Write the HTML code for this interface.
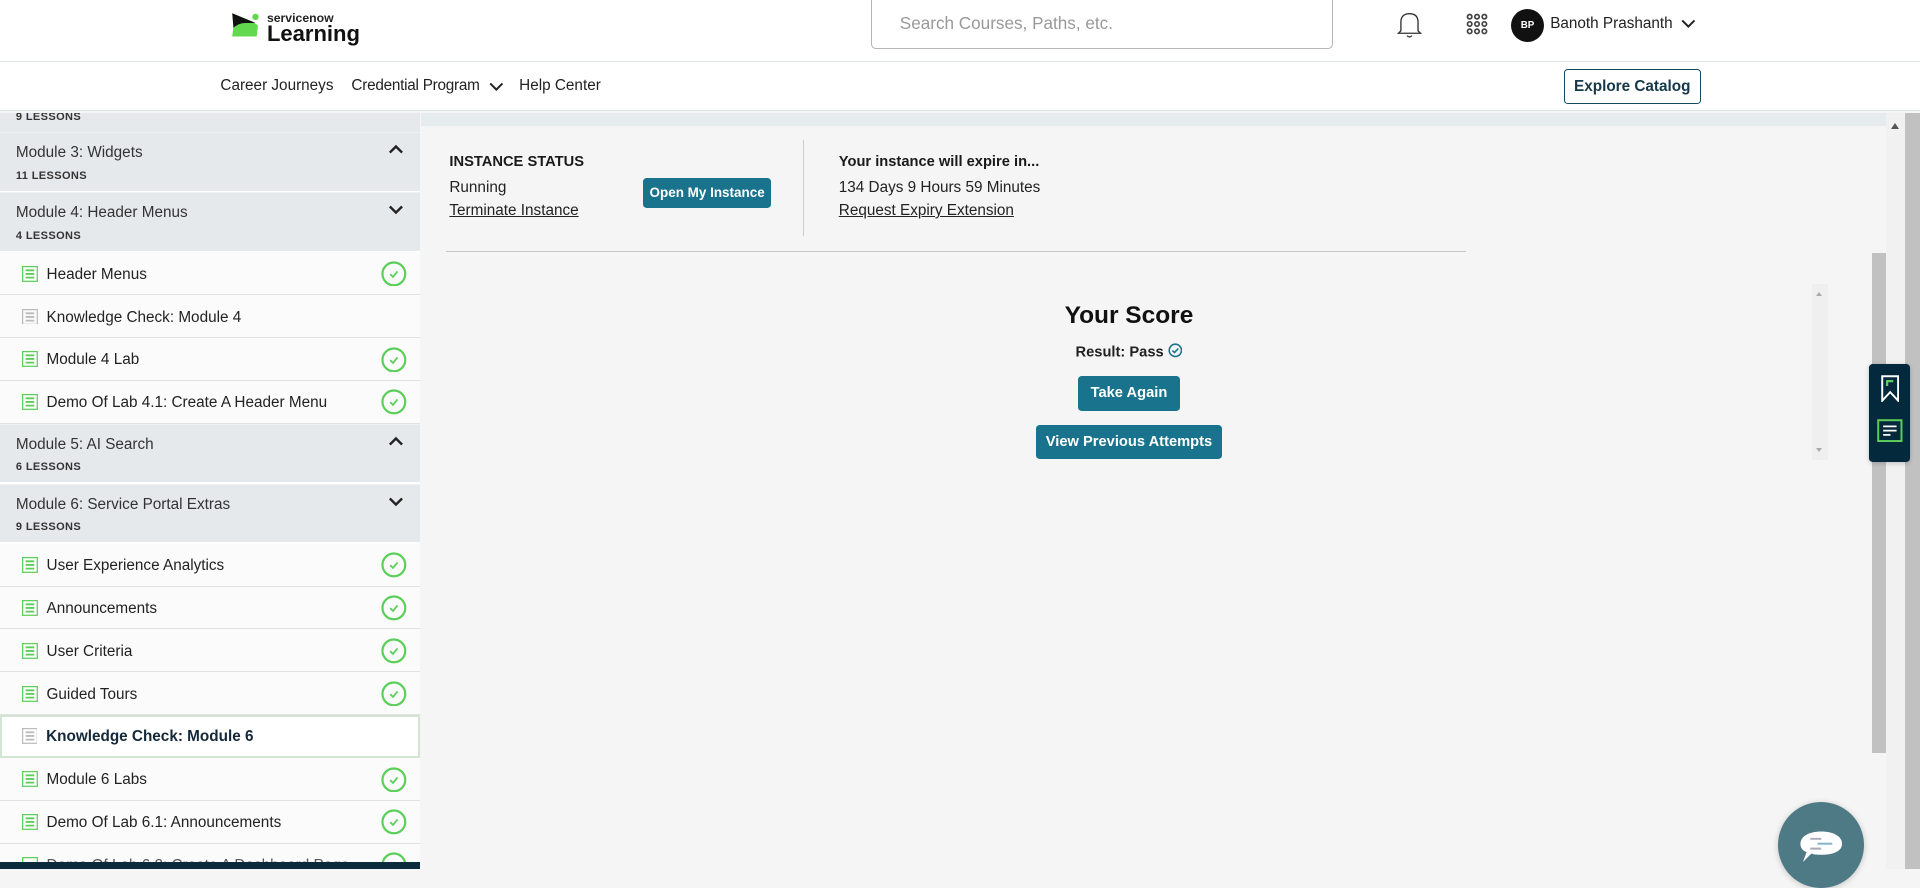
<!DOCTYPE html>
<html><head><meta charset="utf-8">
<style>
html{zoom:1.224489}
*{box-sizing:border-box;margin:0;padding:0}
body{width:1568px;height:710px;overflow:hidden;position:relative;background:#f5f5f5;font-family:"Liberation Sans",sans-serif;color:#1a1a1a}
.a{position:absolute}
.top{left:0;top:0;width:1568px;height:91px;background:#fff;border-bottom:1px solid #dfe4e6}
.top .l1{left:0;top:50px;width:1568px;height:1px;background:#dfe4e6}
.nav{font-size:12.5px;color:#222;top:63px}
.side{left:0;top:92px;width:343px;height:618px;background:#fff;overflow:hidden}
.mod{position:absolute;left:0;width:343px;height:48px;background:#e6e9eb;border-top:1px solid #eef0f1}
.mod .t{position:absolute;left:13px;top:9px;font-size:12.5px;color:#333}
.mod .s{position:absolute;left:13px;top:30px;font-size:9px;font-weight:bold;color:#333;letter-spacing:.3px}
.mod .c{position:absolute;left:317px;top:9px}
.row{position:absolute;left:0;width:343px;height:35px;background:#fbfbfb;border-bottom:1px solid #e2e2e2}
.row .t{position:absolute;left:38px;top:11px;font-size:12.5px;color:#222}
.row .ic{position:absolute;left:18px;top:11px}
.row .ck{position:absolute;left:311px;top:7px}
.btn{background:#19738c;color:#fff;font-weight:bold;font-size:12px;border-radius:3px;text-align:center}
u{text-decoration:underline}
</style></head><body>
<div class="a top">
 <div class="a l1"></div>
 <svg class="a" style="left:189px;top:10px" width="25" height="21" viewBox="0 0 25 21"><path d="M1 1 L18 8 L22 11 L21 20 L1 20 L2 12 Z" fill="#62d84e"/><path d="M1 1 L20 9 L12 9 Q6 9 2 13 Z" fill="#111"/><circle cx="20" cy="4" r="2.6" fill="#62d84e"/></svg>
 <div class="a" style="left:218px;top:9px;font-size:10px;font-weight:bold;color:#222">servicenow</div>
 <div class="a" style="left:218px;top:17px;font-size:18px;font-weight:bold;color:#111">Learning</div>
 <div class="a" style="left:711px;top:0;width:378px;height:40px;border:1px solid #b5b5b5;border-top:none;border-radius:0 0 4px 4px;background:#fff"><span class="a" style="left:23px;top:11px;font-size:14px;color:#999">Search Courses, Paths, etc.</span></div>
 <svg class="a" style="left:1140px;top:8px" width="22" height="24" viewBox="0 0 22 24"><path d="M4 17 L4 10 Q4 3 11 3 Q18 3 18 10 L18 17 L20 19 L2 19 Z" fill="none" stroke="#333" stroke-width="1.1"/><path d="M9 21 Q11 23 13 21" fill="none" stroke="#333" stroke-width="1.1"/></svg>
 <svg class="a" style="left:1197px;top:11px" width="18" height="18" viewBox="0 0 18 18" fill="none" stroke="#444" stroke-width="1.4"><circle cx="3" cy="3" r="1.8"/><circle cx="9" cy="3" r="1.8"/><circle cx="15" cy="3" r="1.8"/><circle cx="3" cy="9" r="1.8"/><circle cx="9" cy="9" r="1.8"/><circle cx="15" cy="9" r="1.8"/><circle cx="3" cy="15" r="1.8"/><circle cx="9" cy="15" r="1.8"/><circle cx="15" cy="15" r="1.8"/></svg>
 <div class="a" style="left:1234px;top:7px;width:27px;height:27px;border-radius:50%;background:#111;color:#fff;font-size:8px;font-weight:bold;text-align:center;line-height:27px">BP</div>
 <div class="a" style="left:1266px;top:12px;font-size:12.5px;color:#222">Banoth Prashanth</div>
 <svg class="a" style="left:1373px;top:15px" width="12" height="9" viewBox="0 0 12 9"><path d="M1 2 L6 7 L11 2" fill="none" stroke="#222" stroke-width="1.6"/></svg>
 <div class="a nav" style="left:180px">Career Journeys</div>
 <div class="a nav" style="left:287px;letter-spacing:-.2px">Credential Program</div>
 <svg class="a" style="left:399px;top:66px" width="12" height="9" viewBox="0 0 12 9"><path d="M1 2 L6 7 L11 2" fill="none" stroke="#222" stroke-width="1.6"/></svg>
 <div class="a nav" style="left:424px">Help Center</div>
 <div class="a" style="left:1277px;top:56px;width:112px;height:29px;border:1px solid #15485b;border-radius:3px;font-size:12.5px;font-weight:bold;color:#15384a;text-align:center;line-height:27px">Explore Catalog</div>
</div>

<div class="a side">
 <div class="mod" style="top:-32px;height:48px"><div class="s" style="top:30px">9 LESSONS</div></div>
 <div class="mod" style="top:16px"><div class="t">Module 3: Widgets</div><div class="s">11 LESSONS</div><svg class="c" width="13" height="9" viewBox="0 0 13 9"><path d="M1.5 7 L6.5 2 L11.5 7" fill="none" stroke="#222" stroke-width="2"/></svg></div>
 <div class="mod" style="top:65px"><div class="t">Module 4: Header Menus</div><div class="s">4 LESSONS</div><svg class="c" width="13" height="9" viewBox="0 0 13 9"><path d="M1.5 2 L6.5 7 L11.5 2" fill="none" stroke="#222" stroke-width="2"/></svg></div>
 <div class="row" style="top:114px"><svg class="ic" width="13" height="13"><rect x=".5" y=".5" width="12" height="12" fill="none" stroke="#5ccf5a"/><path d="M3 3.5h7M3 6.5h7M3 9.5h7" stroke="#5ccf5a" stroke-width="1.5"/></svg><div class="t">Header Menus</div><svg class="ck" width="21" height="21"><circle cx="10.5" cy="10.5" r="9.3" fill="none" stroke="#5ccf5a" stroke-width="1.8"/><path d="M7.5 10.8 L9.8 13 L13.5 8.5" fill="none" stroke="#5ccf5a" stroke-width="1.5"/></svg></div>
 <div class="row" style="top:149px"><svg class="ic" width="13" height="13"><rect x=".5" y=".5" width="12" height="12" fill="none" stroke="#bbb"/><path d="M3 3.5h7M3 6.5h7M3 9.5h7" stroke="#bbb" stroke-width="1.5"/></svg><div class="t">Knowledge Check: Module 4</div></div>
 <div class="row" style="top:184px"><svg class="ic" width="13" height="13"><rect x=".5" y=".5" width="12" height="12" fill="none" stroke="#5ccf5a"/><path d="M3 3.5h7M3 6.5h7M3 9.5h7" stroke="#5ccf5a" stroke-width="1.5"/></svg><div class="t">Module 4 Lab</div><svg class="ck" width="21" height="21"><circle cx="10.5" cy="10.5" r="9.3" fill="none" stroke="#5ccf5a" stroke-width="1.8"/><path d="M7.5 10.8 L9.8 13 L13.5 8.5" fill="none" stroke="#5ccf5a" stroke-width="1.5"/></svg></div>
 <div class="row" style="top:219px"><svg class="ic" width="13" height="13"><rect x=".5" y=".5" width="12" height="12" fill="none" stroke="#5ccf5a"/><path d="M3 3.5h7M3 6.5h7M3 9.5h7" stroke="#5ccf5a" stroke-width="1.5"/></svg><div class="t">Demo Of Lab 4.1: Create A Header Menu</div><svg class="ck" width="21" height="21"><circle cx="10.5" cy="10.5" r="9.3" fill="none" stroke="#5ccf5a" stroke-width="1.8"/><path d="M7.5 10.8 L9.8 13 L13.5 8.5" fill="none" stroke="#5ccf5a" stroke-width="1.5"/></svg></div>
 <div class="mod" style="top:254px"><div class="t">Module 5: AI Search</div><div class="s">6 LESSONS</div><svg class="c" width="13" height="9" viewBox="0 0 13 9"><path d="M1.5 7 L6.5 2 L11.5 7" fill="none" stroke="#222" stroke-width="2"/></svg></div>
 <div class="mod" style="top:303px"><div class="t">Module 6: Service Portal Extras</div><div class="s">9 LESSONS</div><svg class="c" width="13" height="9" viewBox="0 0 13 9"><path d="M1.5 2 L6.5 7 L11.5 2" fill="none" stroke="#222" stroke-width="2"/></svg></div>
 <div class="row" style="top:352px"><svg class="ic" width="13" height="13"><rect x=".5" y=".5" width="12" height="12" fill="none" stroke="#5ccf5a"/><path d="M3 3.5h7M3 6.5h7M3 9.5h7" stroke="#5ccf5a" stroke-width="1.5"/></svg><div class="t">User Experience Analytics</div><svg class="ck" width="21" height="21"><circle cx="10.5" cy="10.5" r="9.3" fill="none" stroke="#5ccf5a" stroke-width="1.8"/><path d="M7.5 10.8 L9.8 13 L13.5 8.5" fill="none" stroke="#5ccf5a" stroke-width="1.5"/></svg></div>
 <div class="row" style="top:387px"><svg class="ic" width="13" height="13"><rect x=".5" y=".5" width="12" height="12" fill="none" stroke="#5ccf5a"/><path d="M3 3.5h7M3 6.5h7M3 9.5h7" stroke="#5ccf5a" stroke-width="1.5"/></svg><div class="t">Announcements</div><svg class="ck" width="21" height="21"><circle cx="10.5" cy="10.5" r="9.3" fill="none" stroke="#5ccf5a" stroke-width="1.8"/><path d="M7.5 10.8 L9.8 13 L13.5 8.5" fill="none" stroke="#5ccf5a" stroke-width="1.5"/></svg></div>
 <div class="row" style="top:422px"><svg class="ic" width="13" height="13"><rect x=".5" y=".5" width="12" height="12" fill="none" stroke="#5ccf5a"/><path d="M3 3.5h7M3 6.5h7M3 9.5h7" stroke="#5ccf5a" stroke-width="1.5"/></svg><div class="t">User Criteria</div><svg class="ck" width="21" height="21"><circle cx="10.5" cy="10.5" r="9.3" fill="none" stroke="#5ccf5a" stroke-width="1.8"/><path d="M7.5 10.8 L9.8 13 L13.5 8.5" fill="none" stroke="#5ccf5a" stroke-width="1.5"/></svg></div>
 <div class="row" style="top:457px"><svg class="ic" width="13" height="13"><rect x=".5" y=".5" width="12" height="12" fill="none" stroke="#5ccf5a"/><path d="M3 3.5h7M3 6.5h7M3 9.5h7" stroke="#5ccf5a" stroke-width="1.5"/></svg><div class="t">Guided Tours</div><svg class="ck" width="21" height="21"><circle cx="10.5" cy="10.5" r="9.3" fill="none" stroke="#5ccf5a" stroke-width="1.8"/><path d="M7.5 10.8 L9.8 13 L13.5 8.5" fill="none" stroke="#5ccf5a" stroke-width="1.5"/></svg></div>
 <div class="row" style="top:492px;border:2px solid #d3e6d3;background:#fff"><svg class="ic" width="13" height="13" style="left:16px;top:9px"><rect x=".5" y=".5" width="12" height="12" fill="none" stroke="#bbb"/><path d="M3 3.5h7M3 6.5h7M3 9.5h7" stroke="#bbb" stroke-width="1.5"/></svg><div class="t" style="left:36px;top:9px;font-weight:bold;color:#14283a">Knowledge Check: Module 6</div></div>
 <div class="row" style="top:527px"><svg class="ic" width="13" height="13"><rect x=".5" y=".5" width="12" height="12" fill="none" stroke="#5ccf5a"/><path d="M3 3.5h7M3 6.5h7M3 9.5h7" stroke="#5ccf5a" stroke-width="1.5"/></svg><div class="t">Module 6 Labs</div><svg class="ck" width="21" height="21"><circle cx="10.5" cy="10.5" r="9.3" fill="none" stroke="#5ccf5a" stroke-width="1.8"/><path d="M7.5 10.8 L9.8 13 L13.5 8.5" fill="none" stroke="#5ccf5a" stroke-width="1.5"/></svg></div>
 <div class="row" style="top:562px"><svg class="ic" width="13" height="13"><rect x=".5" y=".5" width="12" height="12" fill="none" stroke="#5ccf5a"/><path d="M3 3.5h7M3 6.5h7M3 9.5h7" stroke="#5ccf5a" stroke-width="1.5"/></svg><div class="t">Demo Of Lab 6.1: Announcements</div><svg class="ck" width="21" height="21"><circle cx="10.5" cy="10.5" r="9.3" fill="none" stroke="#5ccf5a" stroke-width="1.8"/><path d="M7.5 10.8 L9.8 13 L13.5 8.5" fill="none" stroke="#5ccf5a" stroke-width="1.5"/></svg></div>
 <div class="row" style="top:597px"><svg class="ic" width="13" height="13"><rect x=".5" y=".5" width="12" height="12" fill="none" stroke="#5ccf5a"/></svg><div class="t" style="color:#555">Demo Of Lab 6.2: Create A Dashboard Page</div><svg class="ck" width="21" height="21"><circle cx="10.5" cy="10.5" r="9.3" fill="none" stroke="#5ccf5a" stroke-width="1.8"/></svg></div>
 <div class="a" style="left:0;top:612px;width:343px;height:6px;background:#0b2b3c"></div>
</div>

<div class="a" style="left:344px;top:92px;width:1196px;height:11px;background:#e6ebed"></div>
<div class="a" style="left:367px;top:126px;font-size:12px;font-weight:bold">INSTANCE STATUS</div>
<div class="a" style="left:367px;top:146px;font-size:12.5px;color:#222">Running</div>
<div class="a" style="left:367px;top:165px;font-size:12.5px;color:#222"><u>Terminate Instance</u></div>
<div class="a btn" style="left:525px;top:145px;width:105px;height:25px;line-height:25px;font-size:11px">Open My Instance</div>
<div class="a" style="left:656px;top:114px;width:1px;height:79px;background:#ccc"></div>
<div class="a" style="left:685px;top:126px;font-size:12px;font-weight:bold">Your instance will expire in...</div>
<div class="a" style="left:685px;top:146px;font-size:12.5px;color:#222">134 Days 9 Hours 59 Minutes</div>
<div class="a" style="left:685px;top:165px;font-size:12.5px;color:#222"><u>Request Expiry Extension</u></div>
<div class="a" style="left:364px;top:205px;width:833px;height:1px;background:#c8c8c8"></div>

<div class="a" style="left:1480px;top:232px;width:13px;height:144px;background:#efefef"></div>
<div class="a" style="left:1483px;top:236px;width:0;height:0;border:3px solid transparent;border-bottom:4px solid #aaa"></div>
<div class="a" style="left:1483px;top:366px;width:0;height:0;border:3px solid transparent;border-top:4px solid #aaa"></div>

<div class="a" style="left:772px;top:247px;width:300px;text-align:center;font-size:20px;font-weight:bold;color:#111">Your Score</div>
<div class="a" style="left:772px;top:280px;width:300px;text-align:center;font-size:12px;font-weight:bold;color:#222">Result: Pass <svg width="12" height="12" style="vertical-align:-1px"><circle cx="6" cy="6" r="5" fill="none" stroke="#19738c" stroke-width="1.3"/><path d="M3.6 6.2 L5.3 7.8 L8.4 4.5" fill="none" stroke="#19738c" stroke-width="1.3"/></svg></div>
<div class="a btn" style="left:880px;top:307px;width:84px;height:29px;line-height:29px">Take Again</div>
<div class="a btn" style="left:846px;top:347px;width:152px;height:28px;line-height:28px">View Previous Attempts</div>

<div class="a" style="left:1540px;top:92px;width:16px;height:618px;background:#f1f1f1"></div>
<div class="a" style="left:1529px;top:207px;width:11px;height:408px;background:#c1c1c1"></div>
<div class="a" style="left:1556px;top:92px;width:12px;height:618px;background:#c1c1c1"></div>
<div class="a" style="left:1544px;top:97px;width:0;height:0;border:3.5px solid transparent;border-bottom:5px solid #555"></div>

<div class="a" style="left:1526px;top:297px;width:34px;height:80px;background:#04293d;border-radius:3px;box-shadow:0 1px 4px rgba(0,0,0,.2)"></div>
<svg class="a" style="left:1536px;top:306px" width="15" height="22" viewBox="0 0 15 22"><path d="M1 1 H14 V21 L7.5 14 L1 21 Z" fill="none" stroke="#fff" stroke-width="1.6"/><path d="M5 9 V5 H10" fill="none" stroke="#5ccf5a" stroke-width="1.8"/></svg>
<svg class="a" style="left:1533px;top:342px" width="21" height="19" viewBox="0 0 21 19"><rect x="1" y="1" width="19" height="17" fill="none" stroke="#5ccf5a" stroke-width="1.6"/><path d="M5 6h11M5 9.5h11M5 13h6" stroke="#fff" stroke-width="1.4"/></svg>

<div class="a" style="left:1452px;top:655px;width:70px;height:70px;border-radius:50%;background:#4e7a85;box-shadow:0 1px 5px rgba(0,0,0,.2)"></div>
<svg class="a" style="left:1468px;top:677px" width="38" height="30" viewBox="0 0 38 30"><path d="M19 2 C29 2 36 6 36 12 C36 18 29 21 19 21 C16 21 13 21 11 20 L4 27 L7 19 C3 17 2 15 2 12 C2 6 9 2 19 2 Z" fill="#fff"/><path d="M10 8h9M10 16h9" stroke="#aab" stroke-width="1.6"/><path d="M16 12h12" stroke="#7fb6c8" stroke-width="1.6"/></svg>
</body></html>
